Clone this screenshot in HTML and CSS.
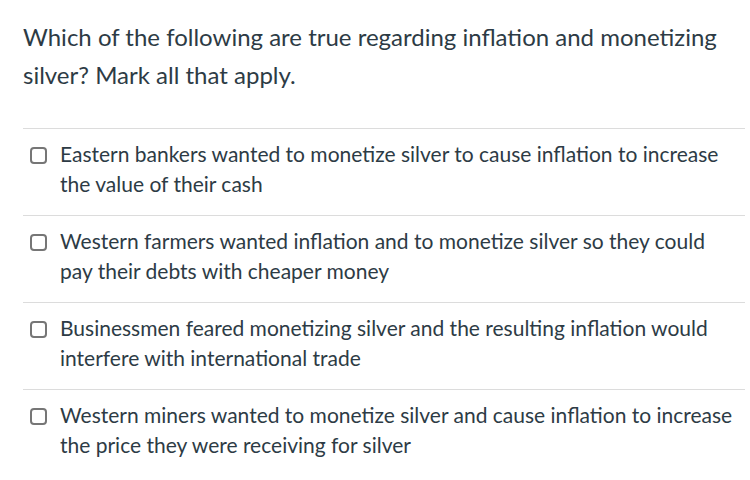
FILE: index.html
```html
<!DOCTYPE html>
<html>
<head>
<meta charset="utf-8">
<link rel="stylesheet" href="styles.css">
</head>
<body>
<div class="quiz">
  <p class="question">Which of the following are true regarding inflation and monetizing silver? Mark all that apply.</p>
  <div class="answers">
    <label class="answer"><span class="box"></span><span class="text">Eastern bankers wanted to monetize silver to cause inflation to increase the value of their cash</span></label>
    <label class="answer"><span class="box"></span><span class="text">Western farmers wanted inflation and to monetize silver so they could pay their debts with cheaper money</span></label>
    <label class="answer"><span class="box"></span><span class="text">Businessmen feared monetizing silver and the resulting inflation would interfere with international trade</span></label>
    <label class="answer"><span class="box"></span><span class="text">Western miners wanted to monetize silver and cause inflation to increase the price they were receiving for silver</span></label>
  </div>
</div>
</body>
</html>
```
FILE: styles.css
```css
html, body {
  margin: 0;
  padding: 0;
  background: #fff;
}
body {
  font-family: Lato, "Noto Sans", sans-serif;
  color: #2d3b45;
}
.quiz {
  padding: 18px 5px 0 23px;
}
.question {
  margin: 0;
  font-size: 24px;
  line-height: 38px;
  padding-right: 10px;
}
.answers {
  margin-top: 34px;
}
.answer {
  display: flex;
  align-items: flex-start;
  border-top: 1px solid #dcdcdc;
  padding: 10px 8px 16px 7px;
}
.box {
  flex: none;
  box-sizing: border-box;
  width: 17px;
  height: 17px;
  border: 2px solid #767676;
  border-radius: 4px;
  margin-top: 8px;
  margin-right: 13px;
}
.text {
  font-size: 21px;
  line-height: 30px;
}
```
